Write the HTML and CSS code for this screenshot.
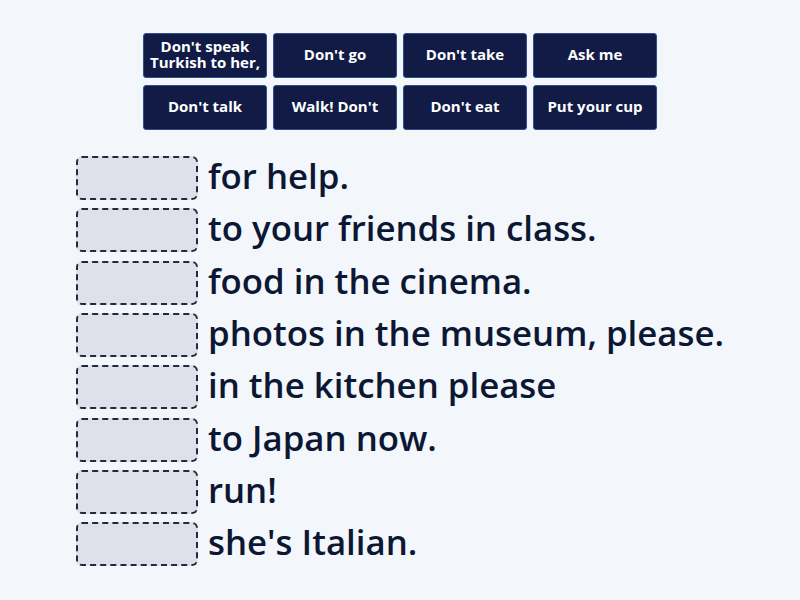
FILE: index.html
```html
<!DOCTYPE html>
<html>
<head>
<meta charset="utf-8">
<link rel="stylesheet" href="styles.css">
</head>
<body>
<div class="page">
  <div class="bank">
    <div class="tile">Don't speak Turkish to her,</div>
    <div class="tile">Don't go</div>
    <div class="tile">Don't take</div>
    <div class="tile">Ask me</div>
    <div class="tile">Don't talk</div>
    <div class="tile">Walk! Don't</div>
    <div class="tile">Don't eat</div>
    <div class="tile">Put your cup</div>
  </div>
  <div class="rows">
    <div class="row"><div class="slot"></div><span class="txt">for help.</span></div>
    <div class="row"><div class="slot"></div><span class="txt">to your friends in class.</span></div>
    <div class="row"><div class="slot"></div><span class="txt">food in the cinema.</span></div>
    <div class="row"><div class="slot"></div><span class="txt">photos in the museum, please.</span></div>
    <div class="row"><div class="slot"></div><span class="txt">in the kitchen please</span></div>
    <div class="row"><div class="slot"></div><span class="txt">to Japan now.</span></div>
    <div class="row"><div class="slot"></div><span class="txt">run!</span></div>
    <div class="row"><div class="slot"></div><span class="txt">she's Italian.</span></div>
  </div>
</div>
</body>
</html>
```

FILE: styles.css
```css
html, body {
  margin: 0;
  padding: 0;
  background: #f3f6fb;
  font-family: "Open Sans", "Noto Sans", sans-serif;
}
.page {
  width: 800px;
  height: 600px;
  padding-top: 33px;
  box-sizing: border-box;
}
.bank {
  display: grid;
  grid-template-columns: repeat(4, 124px);
  grid-auto-rows: 45px;
  column-gap: 6px;
  row-gap: 7px;
  justify-content: center;
}
.tile {
  background: #111b45;
  border: 1px solid #2d4f8f;
  border-radius: 3px;
  color: #ffffff;
  font-weight: 700;
  font-size: 15px;
  line-height: 16px;
  display: flex;
  align-items: center;
  justify-content: center;
  text-align: center;
  padding: 0 4px 3px;
}
.rows {
  margin-top: 26px;
  padding-left: 76px;
  display: flex;
  flex-direction: column;
  gap: 8px;
}
.row {
  display: flex;
  align-items: center;
  height: 44.3px;
}
.slot {
  width: 122px;
  height: 44px;
  box-sizing: border-box;
  border: 2px dashed #222a3d;
  border-radius: 6px;
  background: #dfe1ea;
  flex: none;
}
.txt {
  margin-left: 10px;
  font-size: 34.8px;
  line-height: 40px;
  margin-bottom: 4px;
  font-weight: 600;
  color: #0c1833;
  white-space: nowrap;
}
```
